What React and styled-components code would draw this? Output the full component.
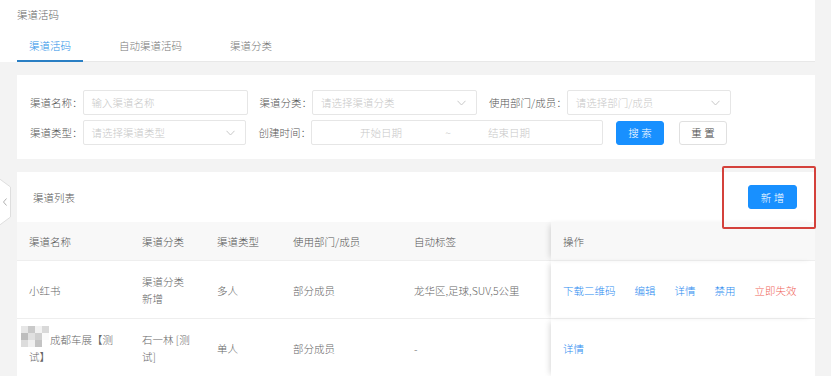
import React from "react";
import styled, { createGlobalStyle } from "styled-components";

const GlobalStyle = createGlobalStyle`
  html, body { margin: 0; padding: 0; height: 100%; overflow: hidden; }
  body { font-family: "Noto Sans CJK SC", "Noto Sans", sans-serif; background: #f3f3f3; }
`;

const Page = styled.div`
  position: relative;
  display: flex;
  width: 831px;
  height: 376px;
  overflow: hidden;
  background: #f3f3f3;
  font-family: "Noto Sans CJK SC", "Noto Sans", sans-serif;
  font-size: 10.5px;
  font-weight: 300;
  color: #666;
`;

const Main = styled.div`
  width: 815px;
  display: flex;
  flex-direction: column;
`;

const Header = styled.header`
  background: #fff;
  padding: 8px 0 0 17px;
`;

const Title = styled.div`
  line-height: 14px;
  color: #666;
`;

const TabBar = styled.div`
  display: flex;
  margin-top: 8px;
  border-bottom: 1px solid #e8e8e8;
`;

const Tab = styled.div`
  box-sizing: border-box;
  height: 32px;
  padding: 0 12px;
  margin-right: 24px;
  margin-bottom: -1px;
  display: flex;
  align-items: center;
  color: ${(p) => (p.$active ? "#2a90e8" : "#777")};
  border-bottom: 2px solid ${(p) => (p.$active ? "#2a7fc4" : "transparent")};
`;

const Body = styled.div`
  flex: 1;
  padding: 13px 0 0 17px;
  display: flex;
  flex-direction: column;
  gap: 13px;
`;

const FilterCard = styled.section`
  background: #fff;
  padding: 15px 0 14px 13px;
  display: flex;
  flex-direction: column;
  gap: 5px;
`;

const FilterRow = styled.div`
  display: flex;
  align-items: center;
  height: 25px;
`;

const Field = styled.div`
  display: flex;
  align-items: center;
  margin-right: ${(p) => p.$mr ?? 12}px;
`;

const Label = styled.span`
  color: #555;
  white-space: nowrap;
`;

const Control = styled.div`
  box-sizing: border-box;
  width: ${(p) => p.$w}px;
  height: 25px;
  border: 1px solid #e6e6e6;
  border-radius: 2px;
  display: flex;
  align-items: center;
  justify-content: space-between;
  padding: 0 10px 0 8px;
  color: #c8c8c8;
  white-space: nowrap;
`;

const DateBox = styled(Control)`
  justify-content: flex-start;
  padding: 0;
`;

const DatePart = styled.span`
  width: ${(p) => p.$w}px;
  margin-left: ${(p) => p.$ml ?? 0}px;
  text-align: ${(p) => p.$align ?? "center"};
  padding-left: ${(p) => p.$pl ?? 0}px;
  box-sizing: border-box;
  color: #c8c8c8;
`;

const Button = styled.button`
  box-sizing: border-box;
  width: 48px;
  height: 24px;
  padding: 0;
  margin-right: ${(p) => p.$mr ?? 0}px;
  border-radius: 3px;
  font: inherit;
  font-size: 10.5px;
  border: 1px solid ${(p) => (p.$primary ? "#1890ff" : "#e0e0e0")};
  background: ${(p) => (p.$primary ? "#1890ff" : "#fff")};
  color: ${(p) => (p.$primary ? "#fff" : "#444")};
`;

const ListCard = styled.section`
  position: relative;
  flex: 1;
  background: #fff;
`;

const CardHeader = styled.div`
  height: 50px;
  display: flex;
  align-items: center;
  justify-content: space-between;
  padding: 0 18px 0 16px;
`;

const CardTitle = styled.span`
  color: #555;
`;

const AddButton = styled(Button)`
  width: 49px;
`;

const Annotation = styled.div`
  position: absolute;
  left: 705px;
  top: -6px;
  width: 94px;
  height: 63px;
  box-sizing: border-box;
  border: 2px solid #d4413b;
  border-radius: 2px;
  pointer-events: none;
`;

const Table = styled.table`
  width: 100%;
  border-collapse: separate;
  border-spacing: 0;
  table-layout: fixed;
`;

const Th = styled.th`
  text-align: left;
  font-weight: 300;
  background: #f8f8f8;
  padding: 11px 12px 10px;
  line-height: 17px;
  color: #555;
  border-bottom: 1px solid #eee;
  box-shadow: ${(p) => (p.$fixed ? "-4px 0 6px -3px rgba(0,0,0,0.16)" : "none")};
`;

const Td = styled.td`
  padding: 12px 12px 11px;
  line-height: 17px;
  color: #666;
  border-bottom: 1px solid #eee;
  vertical-align: middle;
  white-space: ${(p) => (p.$nowrap ? "nowrap" : "normal")};
  box-shadow: ${(p) => (p.$fixed ? "-4px 0 6px -3px rgba(0,0,0,0.16)" : "none")};
`;

const Action = styled.span`
  color: ${(p) => (p.$danger ? "#f0655a" : "#2d8cf0")};
  margin-right: 19px;
  cursor: pointer;
`;

const MosaicSlot = styled.span`
  position: relative;
  display: inline-block;
  width: 21px;
  height: 12px;
`;

const MosaicSvg = styled.svg`
  position: absolute;
  left: -9px;
  top: -6px;
`;

const Handle = styled.svg`
  position: absolute;
  left: 0;
  top: 178px;
`;

const Gutter = styled.div`
  width: 16px;
  background: #f3f3f3;
`;

const Chevron = () => (
  <svg width="9" height="6" viewBox="0 0 9 6">
    <polyline points="0.5,0.8 4.5,5 8.5,0.8" fill="none" stroke="#c8c8c8" strokeWidth="1" />
  </svg>
);

const Mosaic = () => {
  const cells = [
    ["#e6e6e6", "#c9c9c9", "#f2f2f2", "#d9d9d9"],
    ["#bdbdbd", "#e0e0e0", "#cfcfcf", "#fafafa"],
    ["#dcdcdc", "#f0f0f0", "#c4c4c4", "#ffffff"],
  ];
  return (
    <MosaicSvg width="30" height="21" viewBox="0 0 28 21">
      {cells.map((row, r) =>
        row.map((c, i) => <rect key={`${r}-${i}`} x={i * 7} y={r * 7} width="7" height="7" fill={c} />)
      )}
    </MosaicSvg>
  );
};

const cols = [113, 75, 76, 121, 149, 264];

export default function App() {
  return (
    <Page>
      <GlobalStyle />
      <Main>
        <Header>
          <Title>渠道活码</Title>
          <TabBar>
            <Tab $active>渠道活码</Tab>
            <Tab>自动渠道活码</Tab>
            <Tab>渠道分类</Tab>
          </TabBar>
        </Header>
        <Body>
          <FilterCard>
            <FilterRow>
              <Field>
                <Label>渠道名称：</Label>
                <Control $w={165}>输入渠道名称</Control>
              </Field>
              <Field>
                <Label>渠道分类：</Label>
                <Control $w={165}>
                  请选择渠道分类
                  <Chevron />
                </Control>
              </Field>
              <Field>
                <Label>使用部门/成员：</Label>
                <Control $w={164}>
                  请选择部门/成员
                  <Chevron />
                </Control>
              </Field>
            </FilterRow>
            <FilterRow>
              <Field $mr={13}>
                <Label>渠道类型：</Label>
                <Control $w={163}>
                  请选择渠道类型
                  <Chevron />
                </Control>
              </Field>
              <Field $mr={13}>
                <Label>创建时间：</Label>
                <DateBox $w={292}>
                  <DatePart $w={82} $ml={28}>开始日期</DatePart>
                  <DatePart $w={52}>~</DatePart>
                  <DatePart $w={120} $align="left" $pl={14}>结束日期</DatePart>
                </DateBox>
              </Field>
              <Button $primary $mr={15}>搜 索</Button>
              <Button>重 置</Button>
            </FilterRow>
          </FilterCard>
          <ListCard>
            <CardHeader>
              <CardTitle>渠道列表</CardTitle>
              <AddButton $primary>新 增</AddButton>
            </CardHeader>
            <Annotation />
            <Table>
              <colgroup>
                {cols.map((w, i) => (
                  <col key={i} style={{ width: w }} />
                ))}
              </colgroup>
              <thead>
                <tr>
                  <Th>渠道名称</Th>
                  <Th>渠道分类</Th>
                  <Th>渠道类型</Th>
                  <Th>使用部门/成员</Th>
                  <Th>自动标签</Th>
                  <Th $fixed>操作</Th>
                </tr>
              </thead>
              <tbody>
                <tr>
                  <Td>小红书</Td>
                  <Td>渠道分类新增</Td>
                  <Td>多人</Td>
                  <Td>部分成员</Td>
                  <Td $nowrap>龙华区,足球,SUV,5公里</Td>
                  <Td $fixed $nowrap>
                    <Action>下载二维码</Action>
                    <Action>编辑</Action>
                    <Action>详情</Action>
                    <Action>禁用</Action>
                    <Action $danger>立即失效</Action>
                  </Td>
                </tr>
                <tr>
                  <Td>
                    <MosaicSlot>
                      <Mosaic />
                    </MosaicSlot>
                    成都车展【测试】
                  </Td>
                  <Td>石一林 [测试]</Td>
                  <Td>单人</Td>
                  <Td>部分成员</Td>
                  <Td>-</Td>
                  <Td $fixed>
                    <Action>详情</Action>
                  </Td>
                </tr>
              </tbody>
            </Table>
          </ListCard>
        </Body>
      </Main>
      <Gutter />
      <Handle width="12" height="48" viewBox="0 0 12 48">
        <polygon points="-1,0.5 10.5,9 10.5,39 -1,47.5" fill="#fff" stroke="#dedede" strokeWidth="1" />
        <polyline points="6.5,20.5 3.5,24 6.5,27.5" fill="none" stroke="#b0b0b0" strokeWidth="1" />
      </Handle>
    </Page>
  );
}
